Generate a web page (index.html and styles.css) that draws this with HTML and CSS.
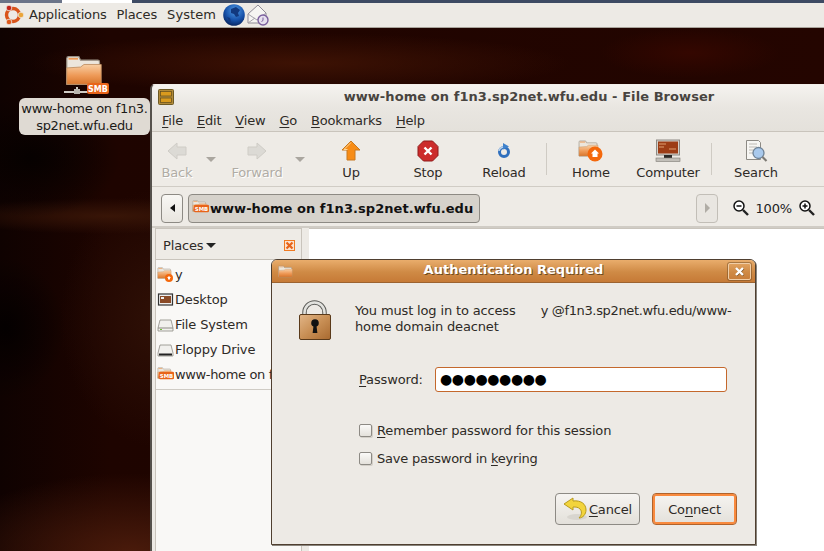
FILE: index.html
```html
<!DOCTYPE html>
<html lang="en">
<head>
    <meta charset="UTF-8">
    <title>www-home on f1n3.sp2net.wfu.edu - File Browser</title>
    <link rel="stylesheet" href="styles.css">
</head>
<body>
    <svg class="defs" width="0" height="0">
        <defs>
            <linearGradient id="folderFront" x1="0" y1="0" x2="0" y2="1">
                <stop offset="0" stop-color="#f8cfa4"/>
                <stop offset=".55" stop-color="#ee9a58"/>
                <stop offset="1" stop-color="#d9762c"/>
            </linearGradient>
            <linearGradient id="lockBody" x1="0" y1="0" x2="1" y2="1">
                <stop offset="0" stop-color="#e2b688"/>
                <stop offset=".5" stop-color="#c88f55"/>
                <stop offset="1" stop-color="#a8692f"/>
            </linearGradient>
            <radialGradient id="globe" cx="0.55" cy="0.3" r="0.75">
                <stop offset="0" stop-color="#4f9be6"/>
                <stop offset=".6" stop-color="#1650a8"/>
                <stop offset="1" stop-color="#071f56"/>
            </radialGradient>
            <symbol id="folder" viewBox="0 0 22 18">
                <path d="M1 2a1 1 0 0 1 1-1h6l1 2h10a1 1 0 0 1 1 1v13H1z" fill="#ece6dc" stroke="#9c9386" stroke-width=".7"/>
                <path d="M2 2.200h5.500" stroke="#ef9a55" stroke-width="1"/>
                <path d="M1 17V7.500l8-.5 2-1.500h10V17z" fill="url(#folderFront)" stroke="#c08f62" stroke-width=".5"/>
            </symbol>
            <symbol id="smbBadge" viewBox="0 0 22 11">
                <rect width="22" height="11" rx="2" fill="#e8641a"/>
                <text x="11" y="8.500" text-anchor="middle" font-family="DejaVu Sans" font-size="8" font-weight="bold" fill="#fff" letter-spacing="0">SMB</text>
            </symbol>
        </defs>
    </svg>

    <div class="strip">
        <div class="strip-left"></div>
        <div class="strip-white"></div>
    </div>

    <!-- top panel -->
    <div class="panel">
        <svg class="ubuntu" width="22" height="22" viewBox="0 0 22 22">
            <circle cx="11" cy="11" r="6.500" fill="none" stroke="#d9541a" stroke-width="3.400"/>
            <circle cx="19" cy="11" r="2.800" fill="#eaa53a" stroke="#edeae5" stroke-width=".8"/>
            <circle cx="7" cy="4" r="2.800" fill="#c3261c" stroke="#edeae5" stroke-width=".8"/>
            <circle cx="7" cy="18" r="2.800" fill="#dc5a1c" stroke="#edeae5" stroke-width=".8"/>
        </svg>
        <span class="panel-item">Applications</span>
        <span class="panel-item">Places</span>
        <span class="panel-item panel-last">System</span>
        <svg class="panel-icon" width="22" height="22" viewBox="0 0 22 22">
            <circle cx="11" cy="11" r="10.800" fill="url(#globe)"/>
            <path d="M8 5l5-2 4 3-2 3 1 3-3 1-2-3-3-1zM4 13l3 1 1 4-2-1z" fill="#12397e"/>
        </svg>
        <svg class="panel-icon" width="22" height="22" viewBox="0 0 22 22">
            <path d="M1 10L11 1l8 8v10H1z" fill="#f6f5f2" stroke="#8f8b96"/>
            <path d="M1 10l9 6 9-7M1 19l7-5" fill="none" stroke="#a5a2ab"/>
            <circle cx="16" cy="16" r="5" fill="#e6e0ee" stroke="#7b5f9e" stroke-width="1.400"/>
            <path d="M16 13.500v3l-1.500 1" fill="none" stroke="#7b5f9e"/>
        </svg>
    </div>

    <div class="desktop">
        <div class="desk-icon">
            <svg class="desk-glyph" width="46" height="41" viewBox="0 0 46 41">
                <use href="#folder" x="0" y="0" width="40" height="31"/>
                <path d="M0 37h25M13 32v5" stroke="#cfcbc4" stroke-width="2"/>
                <rect x="10" y="34" width="6" height="5" fill="#b9b5ae"/>
                <use href="#smbBadge" x="23" y="28" width="22" height="11"/>
            </svg>
            <div class="desk-label">www-home on f1n3.<br>sp2net.wfu.edu</div>
        </div>

        <!-- file browser window -->
        <div class="browser">
            <div class="titlebar">
                <svg class="title-icon" width="16" height="16" viewBox="0 0 16 16">
                    <rect x=".5" y=".5" width="15" height="15" rx="1" fill="#b08a3a" stroke="#6e5a24"/>
                    <rect x="2.500" y="2.500" width="11" height="4.500" fill="#d99a1e" stroke="#5e4a1c" stroke-width=".7"/>
                    <rect x="2.500" y="9" width="11" height="4.500" fill="#d99a1e" stroke="#5e4a1c" stroke-width=".7"/>
                </svg>
                <span class="title-text">www-home on f1n3.sp2net.wfu.edu - File Browser</span>
            </div>

            <div class="menubar">
                <span class="menu-item"><u>F</u>ile</span>
                <span class="menu-item"><u>E</u>dit</span>
                <span class="menu-item"><u>V</u>iew</span>
                <span class="menu-item"><u>G</u>o</span>
                <span class="menu-item"><u>B</u>ookmarks</span>
                <span class="menu-item"><u>H</u>elp</span>
            </div>

            <div class="toolbar">
                <div class="tool tool-back disabled">
                    <svg width="24" height="22" viewBox="0 0 24 22"><path d="M3 11l9-8v4h9v8h-9v4z" fill="#dcdad5" stroke="#cfccc6"/></svg>
                    <span>Back</span>
                </div>
                <div class="drop drop-back"></div>
                <div class="tool tool-forward disabled">
                    <svg width="24" height="22" viewBox="0 0 24 22"><path d="M21 11l-9-8v4H3v8h9v4z" fill="#dcdad5" stroke="#cfccc6"/></svg>
                    <span>Forward</span>
                </div>
                <div class="drop drop-forward"></div>
                <div class="tool tool-up">
                    <svg width="24" height="22" viewBox="0 0 24 22"><path d="M12 1l9 9h-5v10H8V10H3z" fill="#f78c16" stroke="#c8781e"/><path d="M12 2.500L5 9.500h3.500" fill="none" stroke="#fcd79a"/></svg>
                    <span>Up</span>
                </div>
                <div class="tool tool-stop">
                    <svg width="24" height="22" viewBox="0 0 24 22"><path d="M7.500 1h9L22 6.500v9L16.500 21h-9L2 15.500v-9z" fill="#cc2c2c" stroke="#8e1a1a"/><path d="M8.500 7.500l7 7m0-7l-7 7" stroke="#fff" stroke-width="2.400"/></svg>
                    <span>Stop</span>
                </div>
                <div class="tool tool-reload">
                    <svg width="24" height="22" viewBox="0 0 24 22"><circle cx="12" cy="12" r="4.500" fill="none" stroke="#2f6fbd" stroke-width="3"/><path d="M11 3l6 3.500-6 3z" fill="#3f82cc"/><path d="M7 11a5 5 0 0 1 4-4" fill="none" stroke="#b9d2ec" stroke-width="1.300"/></svg>
                    <span>Reload</span>
                </div>
                <div class="tool-sep"></div>
                <div class="tool tool-home">
                    <svg width="26" height="24" viewBox="0 0 26 24">
                        <use href="#folder" x="0" y="1" width="21" height="17"/>
                        <circle cx="17" cy="15" r="7.500" fill="#f4680c"/>
                        <path d="M17 10.500l4 4h-1.500v3.500h-5v-3.500H13z" fill="#fff"/>
                    </svg>
                    <span>Home</span>
                </div>
                <div class="tool tool-computer">
                    <svg width="26" height="24" viewBox="0 0 26 24">
                        <rect x="1.500" y="1" width="23" height="15" fill="#d5d2cc" stroke="#8d8a84"/>
                        <rect x="3" y="2.500" width="20" height="12" fill="#9d3d16"/>
                        <path d="M4 5h7M4 8h5M14 10h7" stroke="#e0a070"/>
                        <rect x="9" y="16" width="8" height="3" fill="#2c2a28"/>
                        <rect x="1" y="19" width="24" height="3.500" fill="#c2bfb9" stroke="#7d7a74" stroke-width=".6"/>
                    </svg>
                    <span>Computer</span>
                </div>
                <div class="tool-sep tool-sep-two"></div>
                <div class="tool tool-search">
                    <svg width="24" height="24" viewBox="0 0 24 24">
                        <path d="M2.500 1.500h12l2 2v17h-14z" fill="#f7f6f3" stroke="#8d8a84"/>
                        <path d="M5 5h8M5 8h8M5 11h5M5 14h4" stroke="#bdbab4"/>
                        <circle cx="14.500" cy="14" r="5.500" fill="#a9c9ec" stroke="#6f8397" stroke-width="1.300"/>
                        <path d="M18.500 18l4 4" stroke="#7d7a74" stroke-width="2.200"/>
                    </svg>
                    <span>Search</span>
                </div>
            </div>

            <div class="locationbar">
                <div class="nav-btn"><i class="arrow-left"></i></div>
                <div class="path-btn">
                    <svg width="18" height="16" viewBox="0 0 18 16">
                        <use href="#folder" x="0" y="0" width="15" height="12"/>
                        <use href="#smbBadge" x="2" y="4" width="15" height="9"/>
                    </svg>
                    <span>www-home on f1n3.sp2net.wfu.edu</span>
                </div>
                <div class="loc-spacer"></div>
                <div class="nav-btn nav-off"><i class="arrow-right"></i></div>
                <div class="zoom-ctl">
                    <svg width="18" height="18" viewBox="0 0 18 18"><circle cx="7" cy="7" r="5" fill="#fff" stroke="#111" stroke-width="1.500"/><path d="M4.500 7h5" stroke="#111" stroke-width="1.500"/><path d="M11 11l5 5" stroke="#222" stroke-width="2.400"/></svg>
                    <span class="zoom-num">100%</span>
                    <svg width="18" height="18" viewBox="0 0 18 18"><circle cx="7" cy="7" r="5" fill="#fff" stroke="#111" stroke-width="1.500"/><path d="M4.500 7h5M7 4.500v5" stroke="#111" stroke-width="1.500"/><path d="M11 11l5 5" stroke="#222" stroke-width="2.400"/></svg>
                </div>
            </div>

            <div class="content">
                <div class="sidebar">
                    <div class="side-head">
                        <span class="side-title">Places</span><i class="side-caret"></i>
                        <svg class="side-close" width="11" height="11" viewBox="0 0 11 11"><rect width="11" height="11" fill="#ef7a22"/><rect x="1" y="1" width="9" height="9" fill="#fbe3cf"/><path d="M2.500 2.500l6 6m0-6l-6 6" stroke="#e8641a" stroke-width="2.200"/></svg>
                    </div>
                    <ul class="side-list">
                        <li>
                            <svg width="18" height="16" viewBox="0 0 18 16"><use href="#folder" x="0" y="0" width="15" height="12"/><circle cx="12" cy="11" r="4" fill="#f4680c"/><path d="M12 9l2 2h-1v1.500h-2V11h-1z" fill="#fff"/></svg>
                            <span>y</span>
                        </li>
                        <li>
                            <svg width="18" height="16" viewBox="0 0 18 16"><rect x="1.500" y="2" width="14" height="11" fill="#eee" stroke="#333" stroke-width="1.200"/><rect x="3" y="4" width="11" height="7" fill="#8a4a26"/><rect x="4" y="5" width="3" height="2" fill="#eee"/></svg>
                            <span>Desktop</span>
                        </li>
                        <li>
                            <svg width="18" height="16" viewBox="0 0 18 16"><path d="M3 3h11l2 8v3H1v-3z" fill="#f1f0ed" stroke="#8d8a84" stroke-width=".8"/><path d="M1 11h15" stroke="#8d8a84"/><path d="M3 12.500h2" stroke="#6fbf3a"/></svg>
                            <span>File System</span>
                        </li>
                        <li>
                            <svg width="18" height="16" viewBox="0 0 18 16"><path d="M3 3h11l2 8v3H1v-3z" fill="#f1f0ed" stroke="#8d8a84" stroke-width=".8"/><path d="M2 12.500h13" stroke="#222" stroke-width="2"/></svg>
                            <span>Floppy Drive</span>
                        </li>
                        <li>
                            <svg width="18" height="16" viewBox="0 0 18 16"><use href="#folder" x="0" y="0" width="15" height="12"/><use href="#smbBadge" x="2" y="4" width="15" height="9"/></svg>
                            <span class="side-tight">www-home on f</span>
                        </li>
                    </ul>
                    <div class="side-rule"></div>
                </div>
                <div class="main-pane"></div>
            </div>
        </div>

        <!-- auth dialog -->
        <div class="dialog">
            <div class="dlg-title">
                <svg width="15" height="13" viewBox="0 0 22 18"><use href="#folder" width="22" height="18"/></svg>
                <span class="dlg-title-text">Authentication Required</span>
                <div class="dlg-close">
                    <svg width="11" height="11" viewBox="0 0 11 11"><path d="M2.500 2.500l7 7m0-7l-7 7" stroke="#6e4a22" stroke-width="2.400"/><path d="M2 2l7 7m0-7l-7 7" stroke="#fff" stroke-width="2.400"/></svg>
                </div>
            </div>
            <div class="dlg-body">
                <div class="dlg-top">
                    <svg class="lock" width="36" height="42" viewBox="0 0 36 42">
                        <path d="M7.500 16v-3.500a10 10 0 0 1 20 0V16" fill="none" stroke="#5c5c58" stroke-width="4.500"/>
                        <path d="M7.500 16v-3.500a10 10 0 0 1 20 0V16" fill="none" stroke="#e2e2de" stroke-width="2.500"/>
                        <rect x="2.500" y="14.500" width="31" height="25" rx="1.500" fill="url(#lockBody)" stroke="#5a3a1a"/>
                        <circle cx="18" cy="23" r="3.800" fill="#111"/>
                        <path d="M16.800 24h2.400l1.200 9h-4.800z" fill="#111"/>
                    </svg>
                    <p class="dlg-msg">You must log in to access<span class="msg-gap"></span><span class="msg-tight">y @f1n3.sp2net.wfu.edu/www-</span><br>home domain deacnet</p>
                </div>
                <div class="pw-row">
                    <span class="pw-label"><u>P</u>assword:</span>
                    <div class="pw-entry">●●●●●●●●●</div>
                </div>
                <div class="check-row check-one"><i class="check"></i><span><u>R</u>emember password for this session</span></div>
                <div class="check-row check-two"><i class="check"></i><span class="save-text">Save password in <u>k</u>eyring</span></div>
                <div class="dlg-buttons">
                    <div class="btn">
                        <svg width="26" height="26" viewBox="0 0 26 26">
                            <ellipse cx="14" cy="21" rx="10" ry="3" fill="#d8d5cf"/>
                            <path d="M1 8l9-6v3c8-1 13 3 13 9 0 4-3 8-7 8 3-3 3-7 1-9-2-2-4-2-7-2v3z" fill="#f2d43c" stroke="#b89a1c"/>
                        </svg>
                        <span><u>C</u>ancel</span>
                    </div>
                    <div class="btn btn-default"><span>Co<u>n</u>nect</span></div>
                </div>
            </div>
        </div>
    </div>
</body>
</html>
```

FILE: styles.css
```css
* {
    box-sizing: border-box;
}
html, body {
    margin: 0;
    padding: 0;
}
body {
    width: 824px;
    height: 551px;
    overflow: hidden;
    font-family: "DejaVu Sans", sans-serif;
    font-size: 13px;
    letter-spacing: -.15px;
    color: #2e2a26;
    display: flex;
    flex-direction: column;
    background-color: #1a0603;
}
u {
    text-underline-offset: 2px;
    text-decoration-thickness: 1px;
}
.defs {
    position: absolute;
}

/* sliver of the window behind */
.strip {
    height: 3px;
    flex: none;
    display: flex;
    background-color: #3d4a63;
}
.strip-left {
    width: 62px;
    background-color: #6b7488;
}
.strip-white {
    width: 70px;
    background-color: #fff;
}

/* panel */
.panel {
    height: 25px;
    flex: none;
    display: flex;
    align-items: center;
    background-color: #edeae5;
    border-bottom: 1px solid #a9a49b;
    padding-left: 2px;
}
.ubuntu {
    margin-right: 5px;
}
.panel-item {
    margin-right: 10px;
    margin-bottom: 2px;
}
.panel-item.panel-last {
    margin-right: 7px;
    letter-spacing: .1px;
}
.panel-icon {
    margin-right: 2px;
}

/* desktop */
.desktop {
    flex: 1;
    position: relative;
    background:
        radial-gradient(ellipse 90px 60px at 30px 130px, #060100 0%, rgba(6, 1, 0, 0) 100%),
        radial-gradient(ellipse 60px 70px at 5px 300px, #040000 0%, rgba(4, 0, 0, 0) 100%),
        radial-gradient(ellipse 170px 18px at 110px 188px, #381507 0%, rgba(56, 21, 7, 0) 100%),
        radial-gradient(ellipse 100px 130px at 160px 290px, #2f1006 0%, rgba(47, 16, 6, 0) 100%),
        radial-gradient(ellipse 190px 80px at 130px 525px, #4a1b0b 0%, rgba(74, 27, 11, 0) 100%),
        radial-gradient(ellipse 270px 30px at 300px 35px, #3d1204 0%, rgba(61, 18, 4, 0) 100%),
        radial-gradient(ellipse 90px 25px at 690px 25px, #340700 0%, rgba(52, 7, 0, 0) 100%),
        linear-gradient(90deg, #0f0201 0, #1e0400 110px, #240500 100%);
}
.desk-icon {
    position: absolute;
    left: 19px;
    top: 27px;
    width: 131px;
    display: flex;
    flex-direction: column;
}
.desk-glyph {
    margin-left: 45px;
}
.desk-label {
    width: 131px;
    height: 37px;
    margin-top: 2px;
    padding-top: 2px;
    background-color: #dfdad3;
    border-radius: 6px;
    text-align: center;
    line-height: 17px;
    letter-spacing: -.3px;
    color: #1c1a18;
    white-space: nowrap;
}

/* file browser */
.browser {
    position: absolute;
    left: 150px;
    top: 56px;
    width: 674px;
    height: 467px;
    display: flex;
    flex-direction: column;
    background-color: #edeae5;
    border-left: 2px solid #55514c;
    border-top: 1px solid #f2efea;
    border-radius: 5px 0 0 0;
}
.titlebar {
    height: 22px;
    flex: none;
    position: relative;
    display: flex;
    align-items: center;
    justify-content: center;
    padding-left: 82px;
    padding-top: 1px;
    background: linear-gradient(#f5f3ef, #e9e6e1);
    border-radius: 5px 0 0 0;
}
.title-icon {
    position: absolute;
    left: 6px;
    top: 4px;
}
.title-text {
    font-weight: bold;
    color: #48443f;
    letter-spacing: .07px;
}
.menubar {
    height: 25px;
    flex: none;
    display: flex;
    align-items: center;
    padding-left: 10px;
    padding-top: 2px;
    letter-spacing: -.2px;
    background: linear-gradient(#e9e6e1, #e4e1db);
    border-bottom: 1px solid #c9c4bc;
}
.menu-item {
    margin-right: 14px;
}
.toolbar {
    height: 55px;
    flex: none;
    display: flex;
    padding-left: 2px;
    border-bottom: 1px solid #d0ccc5;
    background-color: #eeebe6;
}
.tool {
    display: flex;
    flex-direction: column;
    align-items: center;
    padding-top: 7px;
    flex: none;
}
.tool svg {
    height: 24px;
    margin-bottom: 2px;
}
.tool span {
    line-height: 16px;
}
.disabled span {
    color: #b0aca5;
    text-shadow: 1px 1px 0 #fff;
}
.tool-back { width: 46px; }
.tool-forward { width: 70px; }
.tool-up { width: 86px; }
.tool-stop { width: 68px; }
.tool-reload { width: 84px; }
.tool-home { width: 86px; }
.tool-computer { width: 68px; }
.tool-search { width: 86px; }
.drop {
    flex: none;
    width: 10px;
    margin-top: 25px;
    height: 5px;
    border-top: 5px solid #aaa69f;
    border-left: 5px solid transparent;
    border-right: 5px solid transparent;
}
.drop-back {
    margin-left: 6px;
    margin-right: 6px;
}
.drop-forward {
    margin-left: 3px;
    margin-right: 3px;
}
.tool-sep {
    flex: none;
    width: 1px;
    height: 32px;
    margin-top: 11px;
    margin-right: 1px;
    background-color: #cfcbc4;
}
.tool-sep-two {
    margin-left: 9px;
}
.locationbar {
    height: 41px;
    flex: none;
    display: flex;
    align-items: center;
    padding: 3px 8px 0 9px;
    border-bottom: 2px solid #d0ccc5;
    background-color: #eeebe6;
}
.nav-btn {
    width: 22px;
    height: 29px;
    border: 1px solid #8d8a84;
    border-radius: 4px;
    background: linear-gradient(#f8f7f4, #e8e5df);
    display: flex;
    align-items: center;
    justify-content: center;
}
.nav-off {
    border-color: #c2beb7;
    background: #e9e6e1;
}
.arrow-left {
    border-right: 5px solid #111;
    border-top: 4px solid transparent;
    border-bottom: 4px solid transparent;
}
.arrow-right {
    border-left: 5px solid #b0aca5;
    border-top: 5px solid transparent;
    border-bottom: 5px solid transparent;
}
.path-btn {
    margin-left: 5px;
    width: 292px;
    height: 29px;
    border: 1px solid #8d8a84;
    border-radius: 4px;
    background-color: #d6d2cb;
    display: flex;
    align-items: center;
    padding-left: 3px;
    font-weight: bold;
    letter-spacing: .05px;
    color: #111;
    white-space: nowrap;
}
.path-btn svg {
    flex: none;
}
.loc-spacer {
    flex: 1;
}
.zoom-ctl {
    display: flex;
    align-items: center;
    margin-left: 14px;
    color: #222;
}
.zoom-num {
    margin: 0 6px 0 5px;
}
.content {
    flex: 1;
    display: flex;
    min-height: 0;
}
.sidebar {
    width: 147px;
    margin-left: 3px;
    background-color: #f9f8f6;
    border-left: 1px solid #c9c4bc;
    border-right: 1px solid #c9c4bc;
    flex: none;
}
.side-head {
    height: 32px;
    display: flex;
    align-items: center;
    padding-left: 7px;
    padding-right: 6px;
    padding-top: 2px;
    background-color: #eeebe6;
    border-top: 1px solid #c9c4bc;
    border-bottom: 1px solid #c9c4bc;
}
.side-caret {
    margin-left: 3px;
    border-top: 5px solid #222;
    border-left: 5px solid transparent;
    border-right: 5px solid transparent;
}
.side-close {
    margin-left: auto;
}
.side-list {
    list-style: none;
    margin: 0;
    padding: 2px 0 0;
    height: 129px;
    white-space: nowrap;
}
.side-list li {
    height: 25px;
    display: flex;
    align-items: center;
    padding-left: 1px;
}
.side-list svg {
    flex: none;
}
.side-tight {
    letter-spacing: -.35px;
}
.side-rule {
    height: 1px;
    background-color: #cfcbc4;
}
.main-pane {
    flex: 1;
    margin-left: 7px;
    background-color: #fff;
    border-top: 1px solid #c9c4bc;
}

/* dialog */
.dialog {
    position: absolute;
    left: 271px;
    top: 231px;
    width: 485px;
    height: 286px;
    display: flex;
    flex-direction: column;
    background-color: #edeae5;
    border: 1px solid #4f3f30;
    border-radius: 6px 6px 0 0;
    box-shadow: 1px 1px 0 #8a857d;
}
.dlg-title {
    height: 23px;
    flex: none;
    display: flex;
    align-items: center;
    position: relative;
    padding-left: 6px;
    background: linear-gradient(#e9ad6c, #cf8a45 55%, #c67a36);
    border-bottom: 1px solid #9c6330;
    border-radius: 5px 5px 0 0;
}
.dlg-title-text {
    position: absolute;
    left: 0;
    right: 0;
    top: 2px;
    text-align: center;
    font-weight: bold;
    color: #fff;
    text-shadow: 1px 1px 0 #6e4a22;
    letter-spacing: 0;
}
.dlg-close {
    margin-left: auto;
    margin-right: 4px;
    width: 23px;
    height: 17px;
    border: 1px solid #f0cda6;
    border-radius: 2px;
    box-shadow: 0 0 0 1px rgba(110, 74, 34, .5);
    display: flex;
    align-items: center;
    justify-content: center;
    position: relative;
}
.dlg-body {
    flex: 1;
    display: flex;
    flex-direction: column;
    padding-left: 26px;
}
.dlg-top {
    display: flex;
    padding-top: 17px;
}
.lock {
    flex: none;
    margin-left: -1px;
}
.dlg-msg {
    margin: 3px 0 0 22px;
    line-height: 16px;
    white-space: nowrap;
}
.msg-gap {
    display: inline-block;
    width: 25px;
}
.msg-tight {
    letter-spacing: -.35px;
}
.pw-row {
    display: flex;
    align-items: center;
    margin-top: 25px;
    padding-left: 61px;
}
.pw-label {
    width: 76px;
    flex: none;
}
.pw-entry {
    width: 292px;
    height: 25px;
    border: 1px solid #c4682c;
    border-radius: 3px;
    background-color: #fff;
    padding-left: 4px;
    font-size: 14px;
    letter-spacing: -.4px;
    line-height: 23px;
    color: #000;
    white-space: nowrap;
}
.check-row {
    display: flex;
    align-items: center;
    padding-left: 61px;
    height: 18px;
}
.check-one {
    margin-top: 29px;
}
.check-two {
    margin-top: 10px;
}
.save-text {
    letter-spacing: -.23px;
}
.check {
    width: 13px;
    height: 13px;
    margin-right: 5px;
    border: 1px solid #8d8a84;
    border-radius: 2px;
    background: linear-gradient(#fbfaf8, #e4e1db);
    box-shadow: 1px 1px 0 #d3cfc8;
}
.dlg-buttons {
    display: flex;
    justify-content: flex-end;
    gap: 12px;
    padding-right: 18px;
    margin-top: 26px;
}
.btn {
    width: 85px;
    height: 32px;
    border: 1px solid #8d8a84;
    border-radius: 4px;
    background: linear-gradient(#f6f4f1, #e3e0da);
    display: flex;
    align-items: center;
    justify-content: center;
}
.btn svg {
    flex: none;
}
.btn-default {
    border-color: #b0632c;
    box-shadow: inset 0 0 0 2px #f98a3e;
}
```
